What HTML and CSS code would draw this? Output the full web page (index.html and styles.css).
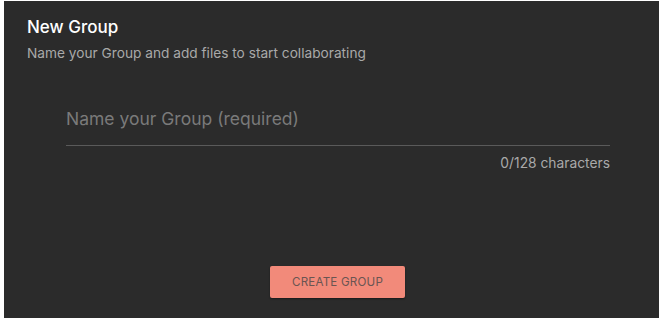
FILE: index.html
```html
<!doctype html>
<html lang="en">
<head>
  <meta charset="utf-8">
  <title>New Group</title>
  <link rel="stylesheet" href="styles.css">
</head>
<body>
  <div class="group-dialog">
    <h1 class="group-title">New Group</h1>
    <p class="group-subtitle">Name your Group and add files to start collaborating</p>
    <div class="group-field">
      <input type="text" class="group-input" placeholder="Name your Group (required)" maxlength="128">
      <div class="group-count">0/128 characters</div>
    </div>
    <div class="group-actions">
      <button type="button" class="group-create">Create Group</button>
    </div>
  </div>
</body>
</html>
```

FILE: styles.css
```css
body {
  margin: 0;
  background: #fff;
  font-family: 'Inter', 'Roboto', sans-serif;
}
.group-dialog {
  margin: 1px 3px 4px 4px;
  height: 317px;
  box-sizing: border-box;
  background: #2b2b2b;
  padding: 14px 49px 0 23px;
  display: flex;
  flex-direction: column;
}
.group-title {
  margin: 0;
  font-size: 17px;
  font-weight: 500;
  color: #fff;
  line-height: 24px;
}
.group-subtitle {
  margin: 5px 0 0 0;
  font-size: 13.7px;
  color: #a9a9a9;
  line-height: 18px;
}
.group-field {
  margin: 45px 0 0 39px;
  display: flex;
  flex-direction: column;
}
.group-input {
  background: transparent;
  border: none;
  border-bottom: 1px solid #5a5a5a;
  padding: 0 0 14px 0;
  font-family: inherit;
  font-size: 17.5px;
  line-height: 24px;
  color: #ddd;
  outline: none;
}
.group-input::placeholder {
  color: #7a7a7a;
}
.group-count {
  margin-top: 8px;
  text-align: right;
  font-size: 13.8px;
  color: #a9a9a9;
  line-height: 18px;
}
.group-actions {
  display: flex;
  justify-content: center;
  margin-top: 94px;
  padding-left: 38px;
}
.group-create {
  width: 135px;
  height: 32px;
  background: #f28a7a;
  border: none;
  border-radius: 2px;
  box-shadow: 0 1px 2px rgba(0,0,0,0.4);
  color: #6a5552;
  font-family: inherit;
  font-size: 11.6px;
  text-transform: uppercase;
  letter-spacing: 0.2px;
  cursor: pointer;
}
```
